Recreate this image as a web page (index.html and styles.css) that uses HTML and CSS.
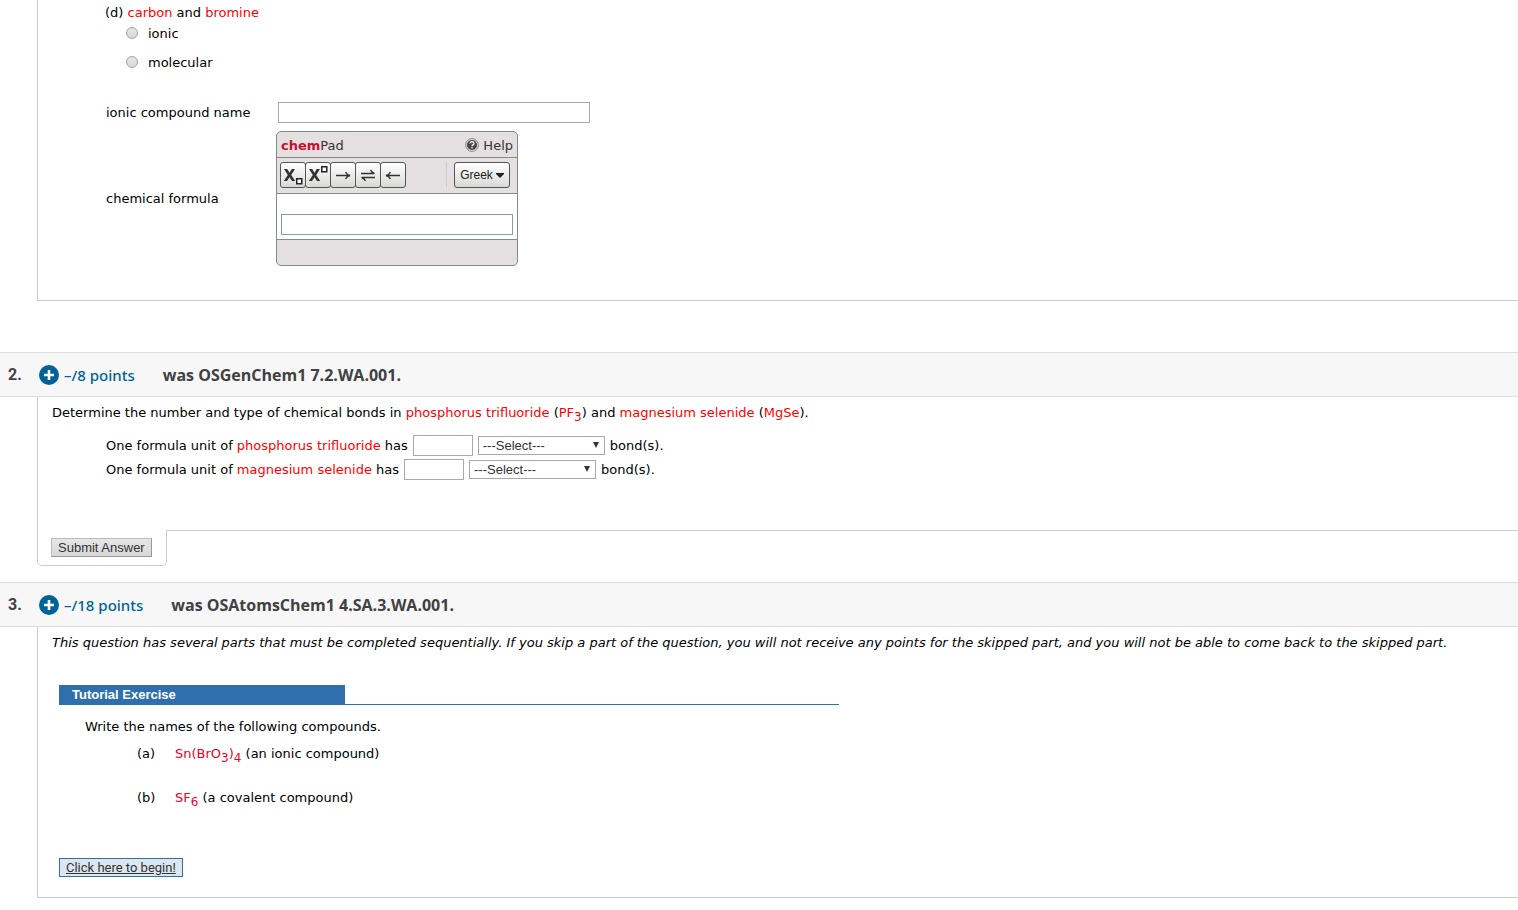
FILE: index.html
```html
<!DOCTYPE html>
<html lang="en">
<head>
<meta charset="utf-8">
<title>Chemistry Assignment</title>
<link rel="stylesheet" href="styles.css">
</head>
<body>
<main>
  <section class="panel panel-first">
    <p class="part">(d) <span class="red">carbon</span> and <span class="red">bromine</span></p>
    <div class="choices">
      <label class="choice"><input type="radio" name="bond-d"><span>ionic</span></label>
      <label class="choice"><input type="radio" name="bond-d"><span>molecular</span></label>
    </div>
    <div class="answers">
      <label for="compound-name">ionic compound name</label>
      <input class="field name-field" id="compound-name" type="text">
      <label for="formula">chemical formula</label>
      <div class="chempad">
        <div class="pad-title">
          <span><b>chem</b>Pad</span>
          <a class="help" href="#help">
            <svg width="14" height="14" viewBox="0 0 14 14" aria-hidden="true"><circle cx="7" cy="7" r="6.4" fill="#ddd" stroke="#888"/><circle cx="7" cy="7" r="5" fill="#444"/><path d="M5 5.5Q5.2 3.8 7 3.8T9 5.4Q9 6.3 8 6.8T7 8.2M7 9.3V10.6" fill="none" stroke="#fff" stroke-width="1.4"/></svg>
            Help</a>
        </div>
        <div class="pad-tools">
          <div class="tools">
            <button type="button" aria-label="Subscript"><svg width="24" height="24" viewBox="0 0 24 24"><path d="M3 6H6.2L8.5 9.8L10.8 6H14L10.2 12L14.2 18H11L8.5 14.2L6 18H2.8L6.8 12Z" fill="#333"/><path d="M15.75 15.75h5v5h-5z" fill="#fff" stroke="#222" stroke-width="1.5"/></svg></button>
            <button type="button" aria-label="Superscript"><svg width="24" height="24" viewBox="0 0 24 24"><path d="M3 6H6.2L8.5 9.8L10.8 6H14L10.2 12L14.2 18H11L8.5 14.2L6 18H2.8L6.8 12Z" fill="#333"/><path d="M15.75 3.75h5v5h-5z" fill="#fff" stroke="#222" stroke-width="1.5"/></svg></button>
            <button type="button" aria-label="Right arrow"><svg width="24" height="24" viewBox="0 0 24 24"><path d="M5 12.5H18M14.5 9Q16 12 19 12.5Q16 13 14.5 16" stroke="#333" stroke-width="1.4" fill="none"/></svg></button>
            <button type="button" aria-label="Equilibrium arrows"><svg width="24" height="24" viewBox="0 0 24 24"><path d="M5 10.5H18.5M14.5 7Q15.5 9.5 18.5 10.5M19 14.5H5.5M9.5 18Q8.5 15.5 5.5 14.5" stroke="#333" stroke-width="1.4" fill="none"/></svg></button>
            <button type="button" aria-label="Left arrow"><svg width="24" height="24" viewBox="0 0 24 24"><path d="M19 12.5H6M9.5 9Q8 12 5 12.5Q8 13 9.5 16" stroke="#333" stroke-width="1.4" fill="none"/></svg></button>
          </div>
          <span class="divider"></span>
          <button class="greek" type="button">Greek<svg width="8" height="5" viewBox="0 0 8 5" aria-hidden="true"><path d="M0 0H8V1L4 5L0 1Z" fill="#222"/></svg></button>
        </div>
        <div class="pad-entry"><input class="field" id="formula" type="text"></div>
        <div class="pad-foot"></div>
      </div>
    </div>
  </section>

  <header class="question">
    <span class="number">2.</span>
    <a class="points" href="#q2"><svg width="20" height="20" viewBox="0 0 20 20" aria-hidden="true"><circle cx="10" cy="10" r="10" fill="#006298"/><path d="M10 5V15M5 10H15" stroke="#fff" stroke-width="2.6"/></svg>–/8 points</a>
    <h2>was OSGenChem1 7.2.WA.001.</h2>
  </header>
  <section class="panel panel-bonds">
    <p class="lead">Determine the number and type of chemical bonds in <span class="red">phosphorus trifluoride</span> (<span class="red">PF<sub>3</sub></span>) and <span class="red">magnesium selenide</span> (<span class="red">MgSe</span>).</p>
    <div class="bond-row">
      <label for="count-1">One formula unit of <span class="red">phosphorus trifluoride</span> has</label>
      <input class="field count" id="count-1" type="text">
      <span class="drop"><select aria-label="Bond type of phosphorus trifluoride"><option>---Select---</option><option>ionic</option><option>covalent</option></select></span>
      <span>bond(s).</span>
    </div>
    <div class="bond-row">
      <label for="count-2">One formula unit of <span class="red">magnesium selenide</span> has</label>
      <input class="field count" id="count-2" type="text">
      <span class="drop"><select aria-label="Bond type of magnesium selenide"><option>---Select---</option><option>ionic</option><option>covalent</option></select></span>
      <span>bond(s).</span>
    </div>
  </section>
  <div class="submit-bar">
    <div class="submit-tab"><button class="submit" type="button">Submit Answer</button></div>
    <div class="submit-rule"></div>
  </div>

  <header class="question">
    <span class="number">3.</span>
    <a class="points" href="#q3"><svg width="20" height="20" viewBox="0 0 20 20" aria-hidden="true"><circle cx="10" cy="10" r="10" fill="#006298"/><path d="M10 5V15M5 10H15" stroke="#fff" stroke-width="2.6"/></svg>–/18 points</a>
    <h2>was OSAtomsChem1 4.SA.3.WA.001.</h2>
  </header>
  <section class="panel panel-tutorial">
    <p class="lead"><em>This question has several parts that must be completed sequentially. If you skip a part of the question, you will not receive any points for the skipped part, and you will not be able to come back to the skipped part.</em></p>
    <div class="tutorial">
      <div class="tutorial-head"><h3>Tutorial Exercise</h3></div>
      <p class="task">Write the names of the following compounds.</p>
      <div class="compounds">
        <span>(a)</span><span><span class="crimson">Sn(BrO<sub>3</sub>)<sub>4</sub></span> (an ionic compound)</span>
        <span>(b)</span><span><span class="crimson">SF<sub>6</sub></span> (a covalent compound)</span>
      </div>
      <a class="begin" href="#begin">Click here to begin!</a>
    </div>
  </section>
</main>
</body>
</html>
```
FILE: styles.css
```css
* { box-sizing: border-box; }
body {
  margin: 0;
  background: #fff;
  color: #000;
  font: 13px/20px "DejaVu Sans", Verdana, sans-serif;
}
p, h2, h3 { margin: 0; }
a { color: inherit; text-decoration: none; }
sub { font-size: 12px; line-height: 0; }
.red { color: #f00; }
.crimson { color: #e8002a; }

.panel {
  margin-left: 37px;
  border-left: 1px solid #ccc;
}
.panel-first {
  padding: 3px 0 34px 67px;
  border-bottom: 1px solid #ccc;
  margin-bottom: 51px;
}
.choices {
  display: grid;
  gap: 9px;
  padding: 1px 0 0 21px;
}
.choice {
  display: flex;
  align-items: center;
  gap: 10px;
}
.choice input {
  appearance: none;
  width: 12px;
  height: 12px;
  margin: 0 0 3px;
  border: 1px solid #a3a3a3;
  border-radius: 50%;
  background: linear-gradient(#e6e6e6, #d9d9d9);
}
.answers {
  display: grid;
  grid-template-columns: 170px 1fr;
  align-items: center;
  row-gap: 8px;
  margin-top: 29px;
  padding-left: 1px;
}
.field {
  height: 21px;
  padding: 1px 4px;
  border: 1px solid #a9a9a9;
  background: #fff;
  font: 13px "Liberation Sans", Arial, sans-serif;
}
.name-field { width: 312px; margin-left: 2px; }

.chempad {
  width: 242px;
  border: 1px solid #888;
  border-radius: 5px;
  background: #e4e0e1;
  color: #333;
}
.pad-title {
  display: flex;
  justify-content: space-between;
  height: 26px;
  padding: 4px 4px 0;
  border-bottom: 1px solid #888;
}
.pad-title b { color: #c8102e; }
.help {
  display: flex;
  gap: 4px;
}
.help svg { margin-top: 2px; }
.pad-tools {
  display: flex;
  height: 36px;
  padding: 4px 7px 0 3px;
  border-bottom: 1px solid #888;
}
.tools { display: flex; }
.tools button, .greek {
  height: 26px;
  padding: 0;
  border: 1px solid #555;
  border-radius: 3px;
  background: linear-gradient(#fff, #d9dad6);
}
.tools button { width: 26px; }
.tools button + button { margin-left: -1px; }
.tools svg { display: block; }
.divider {
  width: 1px;
  height: 25px;
  margin-left: auto;
  margin-right: 7px;
  background: #ccc;
}
.greek {
  display: flex;
  align-items: center;
  justify-content: center;
  gap: 3px;
  width: 56px;
  font: 12px "Liberation Sans", Arial, sans-serif;
  color: #222;
}
.pad-entry {
  padding: 20px 4px 4px;
  background: #fff;
  border-bottom: 1px solid #888;
}
.pad-entry .field {
  display: block;
  width: 100%;
  border-color: #7f9db9;
}
.pad-foot { height: 25px; }

.question {
  display: flex;
  align-items: center;
  height: 45px;
  padding-left: 8px;
  border: solid #ddd;
  border-width: 1px 0;
  background: #f7f7f7;
  color: #414042;
}
.number {
  width: 31px;
  font: bold 16px Roboto, "Liberation Sans", sans-serif;
}
.points {
  display: flex;
  align-items: center;
  gap: 5px;
  color: #006298;
  font: 500 15px/20px "Noto Sans", sans-serif;
}
.question h2 {
  margin-left: 28px;
  font: bold 16px/20px "Open Sans", sans-serif;
}
.lead { padding-left: 14px; }
.panel-bonds { padding: 6px 0 48px; }
.panel-bonds .lead { margin-bottom: 11px; }
.bond-row {
  display: flex;
  align-items: center;
  gap: 5px;
  height: 24px;
  padding-left: 68px;
}
.count, .drop { margin-bottom: 2px; }
.count { width: 60px; }
.drop {
  position: relative;
  display: flex;
}
.drop select {
  appearance: none;
  width: 127px;
  height: 19px;
  padding: 0 20px 0 4px;
  border: 1px solid #a9a9a9;
  border-radius: 0;
  background: #fff;
  color: #333;
  font: 13px "Liberation Sans", Arial, sans-serif;
}
.drop::after {
  content: "";
  position: absolute;
  top: 6px;
  right: 6px;
  border: solid transparent;
  border-width: 6px 3px 0;
  border-top-color: #333;
  pointer-events: none;
}
.submit-bar {
  display: flex;
  margin: 0 0 16px 37px;
}
.submit-tab {
  width: 130px;
  height: 36px;
  padding: 8px 13px 0;
  border: 1px solid #ccc;
  border-top: 0;
  border-radius: 0 0 5px 5px;
}
.submit-rule {
  flex: 1;
  border-top: 1px solid #ccc;
}
.submit {
  display: block;
  height: 19px;
  padding: 0 6px;
  border: 1px solid #aaa;
  border-color: #bbb #999 #999 #bbb;
  background: linear-gradient(#e6e6e6, #d8d8d8);
  color: #333;
  font: 13px "Liberation Sans", Arial, sans-serif;
  white-space: nowrap;
}

.panel-tutorial {
  padding: 6px 0 20px;
  border-bottom: 1px solid #ccc;
}
.tutorial { padding: 32px 21px 0; }
.tutorial-head {
  max-width: 780px;
  border-bottom: 1px solid #2f6fad;
}
.tutorial-head h3 {
  width: 286px;
  padding-left: 13px;
  background: #2f6fad;
  color: #fff;
  font: bold 13px/19px "Liberation Sans", Arial, sans-serif;
}
.task { padding: 12px 0 7px 26px; }
.compounds {
  display: grid;
  grid-template-columns: 38px 1fr;
  row-gap: 24px;
  padding-left: 78px;
  margin-bottom: 50px;
}
.begin {
  display: block;
  width: fit-content;
  padding: 0 6px;
  border: 1px solid #2f6fad;
  background: #dae6f0;
  color: #333;
  font: 13px/17px Roboto, sans-serif;
  text-decoration: underline;
}
```
